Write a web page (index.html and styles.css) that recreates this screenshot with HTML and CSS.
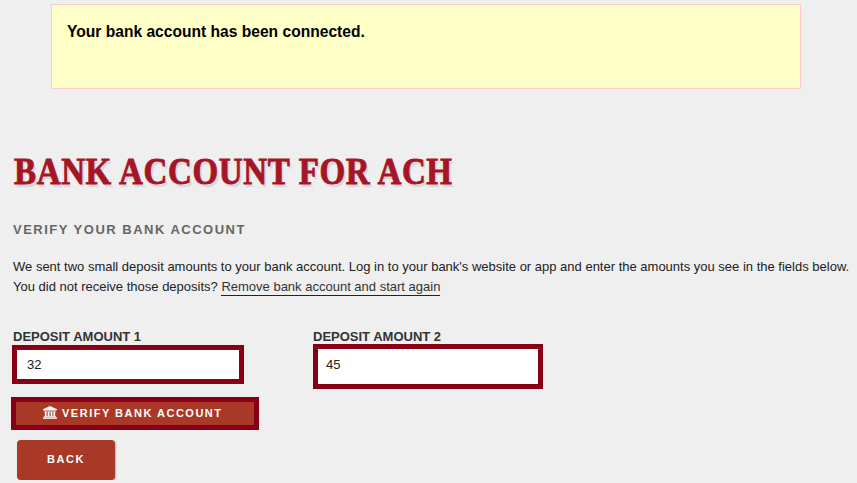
FILE: index.html
```html
<!DOCTYPE html>
<html lang="en">
<head>
    <meta charset="UTF-8">
    <title>Bank Account for ACH</title>
    <link rel="stylesheet" href="styles.css">
</head>
<body>

<div class="notice">Your bank account has been connected.</div>

<div class="content">
    <h1>Bank Account for ACH</h1>
    <h2>Verify your bank account</h2>

    <p class="intro">
        We sent two small deposit amounts to your bank account. Log in to your bank's website or app and enter the amounts you see in the fields below.<br>
        You did not receive those deposits? <a href="#">Remove bank account and start again</a>
    </p>

    <div class="fields">
        <div class="field">
            <label for="amount1">Deposit Amount 1</label>
            <input id="amount1" type="text" value="32">
        </div>
        <div class="field field-second">
            <label for="amount2">Deposit Amount 2</label>
            <input id="amount2" type="text" value="45">
        </div>
    </div>

    <button class="btn btn-verify">
        <svg class="bank-icon" viewBox="0 0 14 13" width="14" height="13" aria-hidden="true">
            <path d="M7 0 L14 3.2 V4.2 H0 V3.2 Z"/>
            <rect x="1" y="4.6" width="12" height="0.8"/>
            <rect x="1.8" y="5.6" width="1.8" height="4.4"/>
            <rect x="4.7" y="5.6" width="1.8" height="4.4"/>
            <rect x="7.6" y="5.6" width="1.8" height="4.4"/>
            <rect x="10.4" y="5.6" width="1.8" height="4.4"/>
            <rect x="1" y="10.2" width="12" height="1"/>
            <rect x="0" y="11.4" width="14" height="1.4"/>
        </svg>
        Verify Bank Account
    </button>

    <button class="btn btn-back">Back</button>
</div>

</body>
</html>
```

FILE: styles.css
```css
body {
    margin: 0;
    background-color: #efefef;
    font-family: "Liberation Sans", Arial, sans-serif;
    color: #222;
    overflow: hidden;
}
.notice {
    box-sizing: border-box;
    width: 750px;
    height: 85px;
    margin: 4px 0 0 51px;
    padding: 17px 15px;
    background-color: #ffffc8;
    border: 1px solid #ffcaca;
    color: #000;
    font-size: 15.6px;
    font-weight: bold;
    line-height: 20px;
}
.content {
    padding: 0 0 0 13px;
}
h1 {
    margin: 63px 0 0 1px;
    color: #a51526;
    font-family: "Liberation Serif", serif;
    font-size: 33px;
    font-weight: bold;
    line-height: 40px;
    letter-spacing: 0.65px;
    text-transform: uppercase;
    -webkit-text-stroke: 0.8px #a51526;
    text-shadow: 2px 2px 1px #d5d5dc;
    white-space: nowrap;
    transform: scaleY(1.12);
}
h2 {
    margin: 29px 0 0;
    color: #666;
    font-size: 13px;
    font-weight: bold;
    line-height: 18px;
    letter-spacing: 1.5px;
    text-transform: uppercase;
}
.intro {
    margin: 18px 0 0;
    font-size: 13px;
    line-height: 20px;
    white-space: nowrap;
}
.intro a {
    color: #333;
    text-decoration: none;
    border-bottom: 1px solid #222;
    padding-bottom: 1px;
}
.fields {
    display: flex;
    margin-top: 32px;
}
.field {
    width: 300px;
}
.field label {
    display: block;
    color: #333;
    font-size: 13px;
    font-weight: bold;
    line-height: 16px;
    text-transform: uppercase;
}
.field input {
    display: block;
    box-sizing: border-box;
    width: 232px;
    height: 39px;
    margin: 0 0 0 -1px;
    padding: 0 10px;
    background-color: #fff;
    border: 5px solid #870016;
    border-radius: 0;
    outline: none;
    color: #222;
    font-family: inherit;
    font-size: 13px;
}
.field-second input {
    width: 230px;
    height: 45px;
    margin: -1px 0 0;
    padding: 0 8px 4px;
}
.btn {
    display: block;
    background-color: #a93826;
    color: #fff;
    font-family: inherit;
    font-weight: bold;
    text-transform: uppercase;
    cursor: pointer;
}
.btn-verify {
    width: 248px;
    height: 33px;
    margin: 8px 0 0 -2px;
    padding: 0 4px 2px 0;
    border: 5px solid #870016;
    font-size: 11px;
    letter-spacing: 1.5px;
}
.bank-icon {
    fill: #fff;
    vertical-align: -2px;
}
.btn-back {
    width: 98px;
    height: 40px;
    margin: 10px 0 0 4px;
    padding: 0 0 2px;
    border: none;
    border-radius: 4px;
    box-shadow: 1px 1px 2px rgba(0, 0, 0, 0.25);
    font-size: 11px;
    letter-spacing: 1.6px;
}
```
